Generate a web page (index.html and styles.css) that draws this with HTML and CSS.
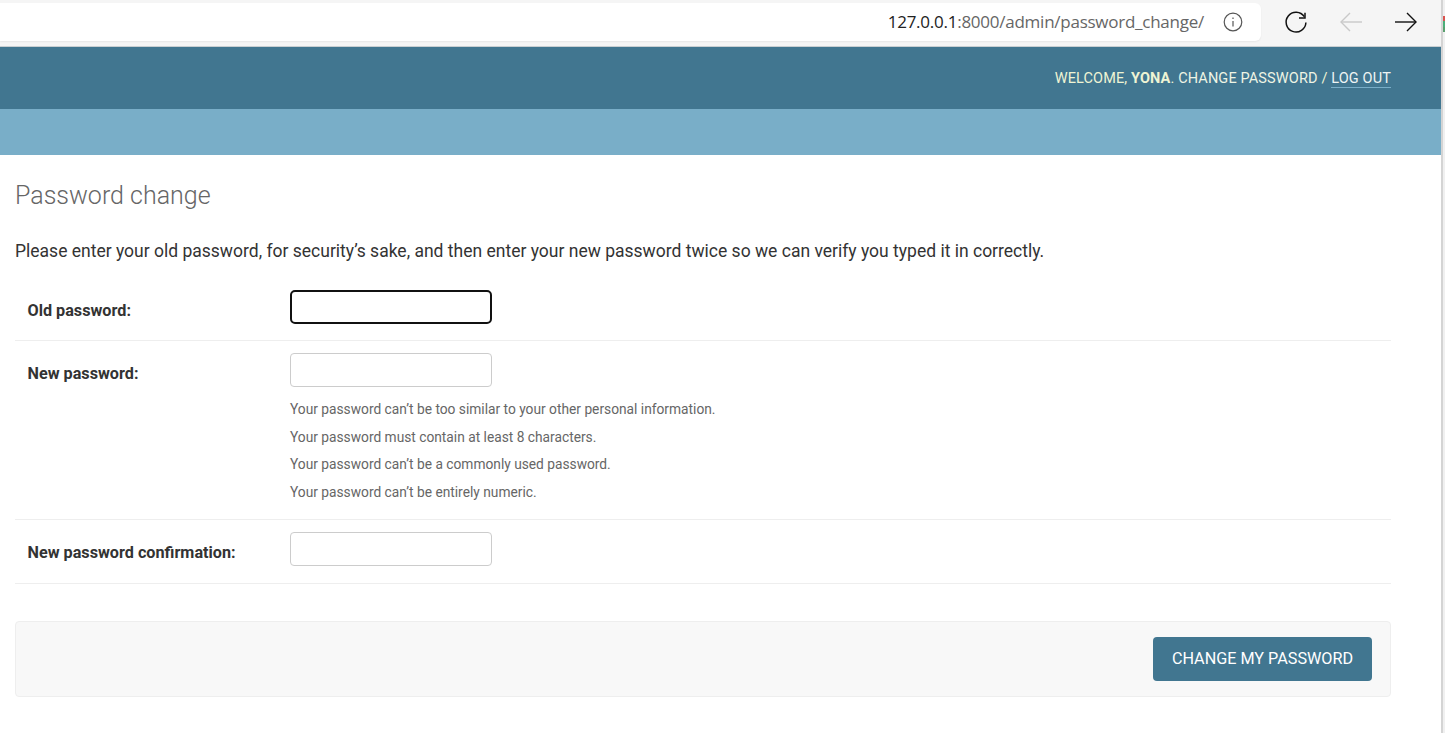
FILE: index.html
```html
<!DOCTYPE html>
<html lang="en">
<head>
<meta charset="utf-8">
<title>Password change</title>
<link rel="stylesheet" href="styles.css">
</head>
<body>
<div class="window">
  <div class="app">
    <div class="chrome">
      <div class="address">
        <span class="url"><span class="host">127.0.0.1</span>:8000/admin/password_change/</span>
        <svg class="info" width="20" height="20" viewBox="0 0 20 20" fill="none" stroke="#555" stroke-width="1.2"><circle cx="10" cy="10" r="8.8"/><path d="M10 9v5.4"/><path d="M10 5.6v1.4"/></svg>
      </div>
      <div class="tools">
        <svg class="tool" width="24" height="24" viewBox="0 0 24 24" fill="none" stroke="#111" stroke-width="1.5"><path d="M20.3 6.7A9.9 9.9 0 1 0 21.9 12.5"/><path d="M15 8H21V2.8"/></svg>
        <svg class="tool" width="24" height="24" viewBox="0 0 24 24" fill="none" stroke="#c9c9c9" stroke-width="1.4"><path d="M23 12H2"/><path d="M11 3l-9 9 9 9"/></svg>
        <svg class="tool" width="24" height="24" viewBox="0 0 24 24" fill="none" stroke="#111" stroke-width="1.4"><path d="M1 12h21"/><path d="M13 3l9 9-9 9"/></svg>
      </div>
    </div>
    <header class="header">
      <div class="user-tools">WELCOME, <strong>YONA</strong>. <a class="plain">CHANGE PASSWORD</a> / <a class="underlined">LOG OUT</a></div>
    </header>
    <div class="breadcrumbs"></div>
    <main class="content">
      <h1 class="title">Password change</h1>
      <p class="intro">Please enter your old password, for security’s sake, and then enter your new password twice so we can verify you typed it in correctly.</p>
      <form class="form">
        <div class="row">
          <label class="label">Old password:</label>
          <div class="field"><input class="input input-focus" type="password"></div>
        </div>
        <div class="row row-help">
          <label class="label">New password:</label>
          <div class="field">
            <input class="input" type="password">
            <ul class="help">
              <li>Your password can’t be too similar to your other personal information.</li>
              <li>Your password must contain at least 8 characters.</li>
              <li>Your password can’t be a commonly used password.</li>
              <li>Your password can’t be entirely numeric.</li>
            </ul>
          </div>
        </div>
        <div class="row row-last">
          <label class="label">New password confirmation:</label>
          <div class="field"><input class="input" type="password"></div>
        </div>
        <div class="submit-row"><button class="submit" type="button">CHANGE MY PASSWORD</button></div>
      </form>
    </main>
  </div>
  <div class="edge"><span class="edge-marks"></span></div>
</div>
</body>
</html>
```
FILE: styles.css
```css
* { box-sizing: border-box; }
html, body { margin: 0; padding: 0; height: 100%; overflow: hidden; background: #fff; }
body { font-family: Roboto, "Liberation Sans", sans-serif; color: #333; }
.window { display: flex; height: 733px; }
.app { flex: 1; min-width: 0; }
.edge { width: 4px; background: #f0f0f0; border-left: 2px solid #d4d4d4; }
.edge-marks { display: block; width: 2px; height: 16px; margin-top: 16px; background: linear-gradient(#d9534f 0 33%, #4caf7a 33% 66%, #5aa06f 66%); }
.chrome { height: 47px; background: #f5f5f5; border-bottom: 1px solid #c9cfd2; padding-top: 3px; display: flex; }
.address { width: 1261px; height: 38px; background: #fff; border-radius: 0 6px 6px 0; display: flex; align-items: center; justify-content: flex-end; padding-right: 18px; gap: 19px; box-shadow: 0 1px 2px rgba(0,0,0,.06); }
.url { font-family: "Open Sans", sans-serif; font-size: 17px; color: #666; letter-spacing: -.25px; padding-bottom: 2px; }
.host { color: #222; }
.tools { display: flex; gap: 31px; padding: 7px 0 0 23px; height: 38px; }
.header { height: 62px; background: #417690; display: flex; justify-content: flex-end; align-items: center; padding-right: 50px; }
.user-tools { font-size: 14.5px; font-weight: 400; color: #eef4d4; letter-spacing: .13px; }
.user-tools strong { font-weight: 700; }
.plain { color: #eef4e4; }
.underlined { color: #eef4f4; border-bottom: 1px solid #79aec8; }
.breadcrumbs { height: 46px; background: #79aec8; }
.content { padding: 26px 50px 0 15px; }
.title { margin: 0; font-size: 25px; font-weight: 300; line-height: 30px; color: #666; }
.intro { margin: 29px 0 0; font-size: 17.5px; line-height: 22px; color: #333; }
.form { margin-top: 16px; }
.row { display: flex; padding: 12px 12.5px 16px; border-bottom: 1px solid #eee; }
.row-help { padding-bottom: 13px; }
.row-last { padding-bottom: 17px; }
.label { width: 262.5px; flex: none; padding-top: 11px; font-size: 16.2px; line-height: 20px; font-weight: 700; color: #333; }
.field { flex: 1; }
.input { display: block; width: 202px; height: 34px; margin: 0; padding: 0; background: #fff; border: 1px solid #ccc; border-radius: 4px; outline: none; }
.input-focus { border: 2px solid #111; border-radius: 5px; }
.help { list-style: none; margin: 9px 0 0; padding: 0; font-size: 13.75px; line-height: 27.6px; color: #666; }
.submit-row { display: flex; justify-content: flex-end; margin-top: 37px; height: 76px; padding: 15px 18px; background: #f8f8f8; border: 1px solid #eee; border-radius: 4px; }
.submit { height: 44px; width: 219px; padding: 0 0 2px; border: 0; border-radius: 4px; background: #417690; color: #fff; font: 400 16.2px Roboto, sans-serif; }
```
